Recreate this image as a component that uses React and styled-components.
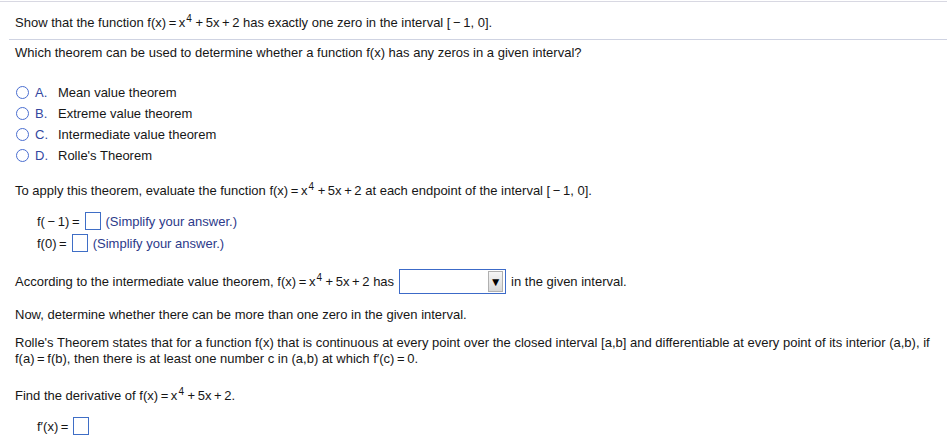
import React from "react";
import styled, { createGlobalStyle } from "styled-components";

const GlobalStyle = createGlobalStyle`
  body {
    margin: 0;
    background: #fff;
    font-family: "Liberation Sans", Arial, sans-serif;
    font-size: 13px;
    color: #161616;
  }
`;

const Page = styled.div`
  width: 947px;
  height: 446px;
  overflow: hidden;
  margin-top: 1px;
  border-top: 1px solid #d8d8e2;
`;

const Header = styled.div`
  padding: 13px 0 0 15px;
  height: 24px;
  line-height: 16px;
`;

const Divider = styled.div`
  margin-left: 9px;
  border-top: 1px solid #cfd3e2;
`;

const Body = styled.div`
  padding: 5px 0 0 15px;
`;

const Para = styled.p`
  margin: ${({ $top }) => $top || 0}px 0 0;
  line-height: 16px;
`;

const Options = styled.ul`
  list-style: none;
  margin: 21px 0 0;
  padding: 0 0 0 1px;
`;

const Option = styled.li`
  display: flex;
  align-items: center;
  height: 21px;
`;

const Radio = styled.span`
  width: 11px;
  height: 11px;
  border: 1.4px solid #4a6ed0;
  border-radius: 50%;
  box-sizing: content-box;
`;

const Letter = styled.span`
  color: #34479f;
  width: 23px;
  margin-left: 6px;
`;

const AnswerRows = styled.div`
  margin-top: 12px;
  padding-left: 22px;
`;

const AnswerRow = styled.div`
  height: 22px;
  line-height: 22px;
`;

const InputBox = styled.span`
  display: inline-block;
  vertical-align: middle;
  width: 14px;
  height: 16px;
  border: 1.4px solid #3f6ec6;
  margin: -3px 5px 0 5px;
  background: #fff;
`;

const Hint = styled.span`
  color: #2c3a8a;
`;

const InlineRow = styled.div`
  height: 26px;
  line-height: 26px;
  margin-top: ${({ $top }) => $top || 0}px;
`;

const Select = styled.span`
  display: inline-flex;
  vertical-align: middle;
  justify-content: flex-end;
  align-items: center;
  width: 103px;
  height: 23px;
  border: 1.2px solid #3c6ac8;
  margin: -2px 5px 0 5px;
  padding-right: 2px;
  box-sizing: content-box;
`;

const SelectButton = styled.span`
  display: flex;
  align-items: center;
  justify-content: center;
  width: 13px;
  height: 19px;
  border: 1px solid #b0b0b0;
  background: linear-gradient(#f6f6f6, #d8d8d8);
  font-size: 12px;
  line-height: 1;
  color: #000;
`;

const Sup = styled.sup`
  font-size: 10px;
  vertical-align: 5px;
  line-height: 0;
  margin: 0 1px 0 1px;
`;

const Fx = () => (
  <>
    f(x)&thinsp;=&thinsp;x<Sup>4</Sup>&thinsp;+&thinsp;5x&thinsp;+&thinsp;2
  </>
);

const options = [
  ["A.", "Mean value theorem"],
  ["B.", "Extreme value theorem"],
  ["C.", "Intermediate value theorem"],
  ["D.", "Rolle's Theorem"],
];

const App = () => (
  <Page>
    <GlobalStyle />
    <Header>
      Show that the function <Fx /> has exactly one zero in the interval [&thinsp;−&thinsp;1, 0].
    </Header>
    <Divider />
    <Body>
      <Para>Which theorem can be used to determine whether a function f(x) has any zeros in a given interval?</Para>
      <Options>
        {options.map(([letter, text]) => (
          <Option key={letter}>
            <Radio />
            <Letter>{letter}</Letter>
            {text}
          </Option>
        ))}
      </Options>
      <Para $top={17}>
        To apply this theorem, evaluate the function <Fx /> at each endpoint of the interval [&thinsp;−&thinsp;1, 0].
      </Para>
      <AnswerRows>
        <AnswerRow>
          f(&thinsp;−&thinsp;1)&thinsp;=<InputBox />
          <Hint>(Simplify your answer.)</Hint>
        </AnswerRow>
        <AnswerRow>
          f(0)&thinsp;=<InputBox />
          <Hint>(Simplify your answer.)</Hint>
        </AnswerRow>
      </AnswerRows>
      <InlineRow $top={14}>
        According to the intermediate value theorem, <Fx /> has
        <Select>
          <SelectButton>▼</SelectButton>
        </Select>
        in the given interval.
      </InlineRow>
      <Para $top={12}>Now, determine whether there can be more than one zero in the given interval.</Para>
      <Para $top={12}>
        Rolle's Theorem states that for a function f(x) that is continuous at every point over the closed interval [a,b] and
        differentiable at every point of its interior (a,b), if f(a)&thinsp;=&thinsp;f(b), then there is at least one number c in
        (a,b) at which f&prime;(c)&thinsp;=&thinsp;0.
      </Para>
      <Para $top={21}>
        Find the derivative of <Fx />.
      </Para>
      <AnswerRows>
        <AnswerRow>
          f&prime;(x)&thinsp;=<InputBox />
        </AnswerRow>
      </AnswerRows>
    </Body>
  </Page>
);

export default App;
